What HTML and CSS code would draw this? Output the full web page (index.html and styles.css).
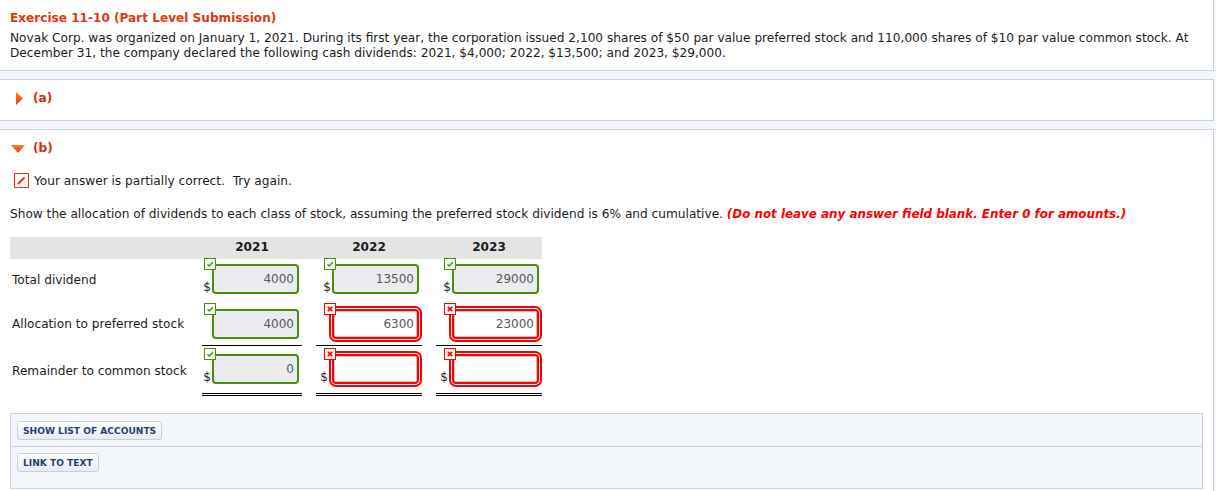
FILE: index.html
```html
<!DOCTYPE html>
<html lang="en">
<head>
    <meta charset="UTF-8">
    <title>Exercise 11-10</title>
    <link rel="stylesheet" href="styles.css">
</head>
<body>
    <div class="panel first">
        <h1 class="title">Exercise 11-10 (Part Level Submission)</h1>
        <p class="intro">Novak Corp. was organized on January 1, 2021. During its first year, the corporation issued 2,100 shares of $50 par value preferred stock and 110,000 shares of $10 par value common stock. At December 31, the company declared the following cash dividends: 2021, $4,000; 2022, $13,500; and 2023, $29,000.</p>
    </div>

    <div class="panel part closed">
        <div class="part-head">
            <svg class="arrow-right" width="7" height="13" viewBox="0 0 7 13">
                <defs>
                    <linearGradient id="orangeA" x1="0" y1="0" x2="0" y2="1">
                        <stop offset="0" stop-color="#ff7a2a"/>
                        <stop offset="1" stop-color="#e8400c"/>
                    </linearGradient>
                </defs>
                <polygon points="0,0 7,6.5 0,13" fill="url(#orangeA)"/>
            </svg>
            <span>(a)</span>
        </div>
    </div>

    <div class="panel part open">
        <div class="part-head">
            <svg class="arrow-down" width="14" height="8" viewBox="0 0 14 8">
                <defs>
                    <linearGradient id="orangeB" x1="0" y1="0" x2="0" y2="1">
                        <stop offset="0" stop-color="#ff7a2a"/>
                        <stop offset="1" stop-color="#e8400c"/>
                    </linearGradient>
                </defs>
                <polygon points="0,0 14,0 7,8" fill="url(#orangeB)"/>
            </svg>
            <span>(b)</span>
        </div>

        <div class="status">
            <span class="status-icon">
                <svg width="13" height="13" viewBox="0 0 13 13"><line x1="3.5" y1="9.5" x2="9" y2="4" stroke="#e8300e" stroke-width="2" stroke-linecap="round"/></svg>
            </span>
            <span>Your answer is partially correct.&nbsp; Try again.</span>
        </div>

        <p class="question">Show the allocation of dividends to each class of stock, assuming the preferred stock dividend is 6% and cumulative. <em class="hint">(Do not leave any answer field blank. Enter 0 for amounts.)</em></p>

        <div class="answer-table">
            <div class="row head">
                <div></div>
                <div class="year">2021</div>
                <div class="year">2022</div>
                <div class="year">2023</div>
            </div>

            <div class="row r1">
                <div class="label">Total dividend</div>
                <div class="cell">
                    <span class="dollar">$</span>
                    <div class="field ok"><span class="mark ok"><svg width="10" height="10" viewBox="0 0 10 10"><polyline points="2.5,5.2 4.3,7 7.8,3.2" fill="none" stroke="#4a8f0c" stroke-width="1.4"/></svg></span><div class="box">4000</div></div>
                </div>
                <div class="cell">
                    <span class="dollar">$</span>
                    <div class="field ok"><span class="mark ok"><svg width="10" height="10" viewBox="0 0 10 10"><polyline points="2.5,5.2 4.3,7 7.8,3.2" fill="none" stroke="#4a8f0c" stroke-width="1.4"/></svg></span><div class="box">13500</div></div>
                </div>
                <div class="cell">
                    <span class="dollar">$</span>
                    <div class="field ok"><span class="mark ok"><svg width="10" height="10" viewBox="0 0 10 10"><polyline points="2.5,5.2 4.3,7 7.8,3.2" fill="none" stroke="#4a8f0c" stroke-width="1.4"/></svg></span><div class="box">29000</div></div>
                </div>
            </div>

            <div class="row r2">
                <div class="label">Allocation to preferred stock</div>
                <div class="cell">
                    <div class="field ok"><span class="mark ok"><svg width="10" height="10" viewBox="0 0 10 10"><polyline points="2.5,5.2 4.3,7 7.8,3.2" fill="none" stroke="#4a8f0c" stroke-width="1.4"/></svg></span><div class="box">4000</div></div>
                </div>
                <div class="cell">
                    <div class="field bad"><span class="mark bad"><svg width="10" height="10" viewBox="0 0 10 10"><path d="M2.8 2.8 L7.2 7.2 M7.2 2.8 L2.8 7.2" stroke="#f00" stroke-width="1.8"/></svg></span><div class="box">6300</div></div>
                </div>
                <div class="cell">
                    <div class="field bad"><span class="mark bad"><svg width="10" height="10" viewBox="0 0 10 10"><path d="M2.8 2.8 L7.2 7.2 M7.2 2.8 L2.8 7.2" stroke="#f00" stroke-width="1.8"/></svg></span><div class="box">23000</div></div>
                </div>
            </div>

            <div class="row r3">
                <div class="label">Remainder to common stock</div>
                <div class="cell">
                    <span class="dollar">$</span>
                    <div class="field ok"><span class="mark ok"><svg width="10" height="10" viewBox="0 0 10 10"><polyline points="2.5,5.2 4.3,7 7.8,3.2" fill="none" stroke="#4a8f0c" stroke-width="1.4"/></svg></span><div class="box">0</div></div>
                </div>
                <div class="cell">
                    <span class="dollar">$</span>
                    <div class="field bad"><span class="mark bad"><svg width="10" height="10" viewBox="0 0 10 10"><path d="M2.8 2.8 L7.2 7.2 M7.2 2.8 L2.8 7.2" stroke="#f00" stroke-width="1.8"/></svg></span><div class="box"></div></div>
                </div>
                <div class="cell">
                    <span class="dollar">$</span>
                    <div class="field bad"><span class="mark bad"><svg width="10" height="10" viewBox="0 0 10 10"><path d="M2.8 2.8 L7.2 7.2 M7.2 2.8 L2.8 7.2" stroke="#f00" stroke-width="1.8"/></svg></span><div class="box"></div></div>
                </div>
            </div>
        </div>

        <div class="tools">
            <div class="tool-row"><button class="btn">SHOW LIST OF ACCOUNTS</button></div>
            <div class="tool-row last"><button class="btn">LINK TO TEXT</button></div>
        </div>
    </div>
</body>
</html>
```

FILE: styles.css
```css
body {
    margin: 0;
    background-color: #f3f6fa;
    font-family: "DejaVu Sans", Verdana, sans-serif;
    font-size: 12.15px;
    color: #1c1c1c;
}
.panel {
    box-sizing: border-box;
    width: 1214px;
    background-color: #fff;
    border: 1px solid #c9d3e1;
    border-left: none;
    margin-bottom: 8px;
    padding: 0 10px;
}
.panel.first {
    border-top: none;
    padding-top: 11px;
    padding-bottom: 9px;
}
.title {
    margin: 0 0 5px;
    font-size: 12.1px;
    line-height: 15px;
    color: #e2380d;
}
.intro {
    margin: 0;
    line-height: 15px;
}
.part-head {
    display: flex;
    align-items: center;
    line-height: 15px;
    font-weight: bold;
    color: #d22d10;
}
.closed {
    height: 42px;
    padding-top: 11px;
}
.closed .part-head {
    padding-left: 6px;
    gap: 10px;
}
.open {
    padding-top: 11px;
    padding-bottom: 40px;
}
.open .part-head {
    padding-left: 1px;
    gap: 8px;
}

/* result line */
.status {
    display: flex;
    align-items: center;
    gap: 5px;
    margin-top: 17px;
    margin-left: 4px;
}
.status-icon {
    box-sizing: border-box;
    width: 15px;
    height: 15px;
    border: 1px solid #e8300e;
    display: flex;
}
.question {
    margin: 19px 0 0;
    line-height: 15px;
}
.hint {
    color: #f00;
    font-weight: bold;
    font-size: 11.9px;
}

/* answer grid */
.answer-table {
    margin-top: 15px;
}
.row {
    display: grid;
    grid-template-columns: 178px 100px 106px 106px;
    column-gap: 14px;
    width: 532px;
}
.row.head {
    background-color: #e4e4e4;
    height: 22px;
    line-height: 20px;
    font-weight: bold;
    font-size: 12.1px;
}
.year {
    text-align: center;
}
.label {
    align-self: center;
    padding-left: 2px;
}
.cell {
    display: flex;
    justify-content: flex-end;
    align-items: flex-end;
    padding-right: 3px;
}
.r1 .cell {
    padding-top: 5px;
    padding-bottom: 7px;
}
.r2 .cell {
    padding-top: 8px;
    padding-bottom: 6px;
    border-bottom: 1px solid #000;
}
.r3 .cell {
    padding-top: 8px;
    padding-bottom: 9px;
    border-bottom: 3px double #000;
}
.dollar {
    font-size: 12px;
    line-height: 13px;
    margin-right: 1px;
}
.field {
    position: relative;
}
.field.bad {
    margin-left: 3px;
}
.box {
    box-sizing: border-box;
    width: 87px;
    height: 30px;
    border-radius: 4px;
    padding-right: 3px;
    text-align: right;
    line-height: 26px;
    font-size: 12px;
    color: #575757;
}
.field.ok .box {
    border: 2px solid #4a8f0c;
    background-color: #ebecf0;
}
.field.bad .box {
    border: 2px solid #f00;
    background-color: #fff;
    box-shadow: inset 0 0 0 1px #c8c8c8, 0 0 0 1px #fff, 0 0 0 3px #f00;
}
.mark {
    position: absolute;
    left: -8px;
    top: -6px;
    box-sizing: border-box;
    width: 12px;
    height: 12px;
    background-color: #fff;
    display: flex;
    align-items: center;
    justify-content: center;
    z-index: 1;
}
.mark.ok {
    border: 1px solid #4a8f0c;
}
.mark.bad {
    border: 1px solid #f00;
}

/* bottom tool links */
.tools {
    margin-top: 17px;
    width: 1193px;
    box-sizing: border-box;
    border: 1px solid #c9d3e1;
    background-color: #f3f6fa;
}
.tool-row {
    padding: 7px 6px 6px;
    border-bottom: 1px solid #c9d3e1;
}
.tool-row.last {
    border-bottom: none;
    padding-top: 6px;
    padding-bottom: 16px;
}
.btn {
    height: 19px;
    padding: 0 5px;
    border: 1px solid #c6cfdb;
    border-radius: 3px;
    background: linear-gradient(#ffffff, #e7ecf2);
    font-family: "DejaVu Sans", Verdana, sans-serif;
    font-size: 9.1px;
    font-weight: bold;
    color: #1f3f7c;
    display: block;
}
```
